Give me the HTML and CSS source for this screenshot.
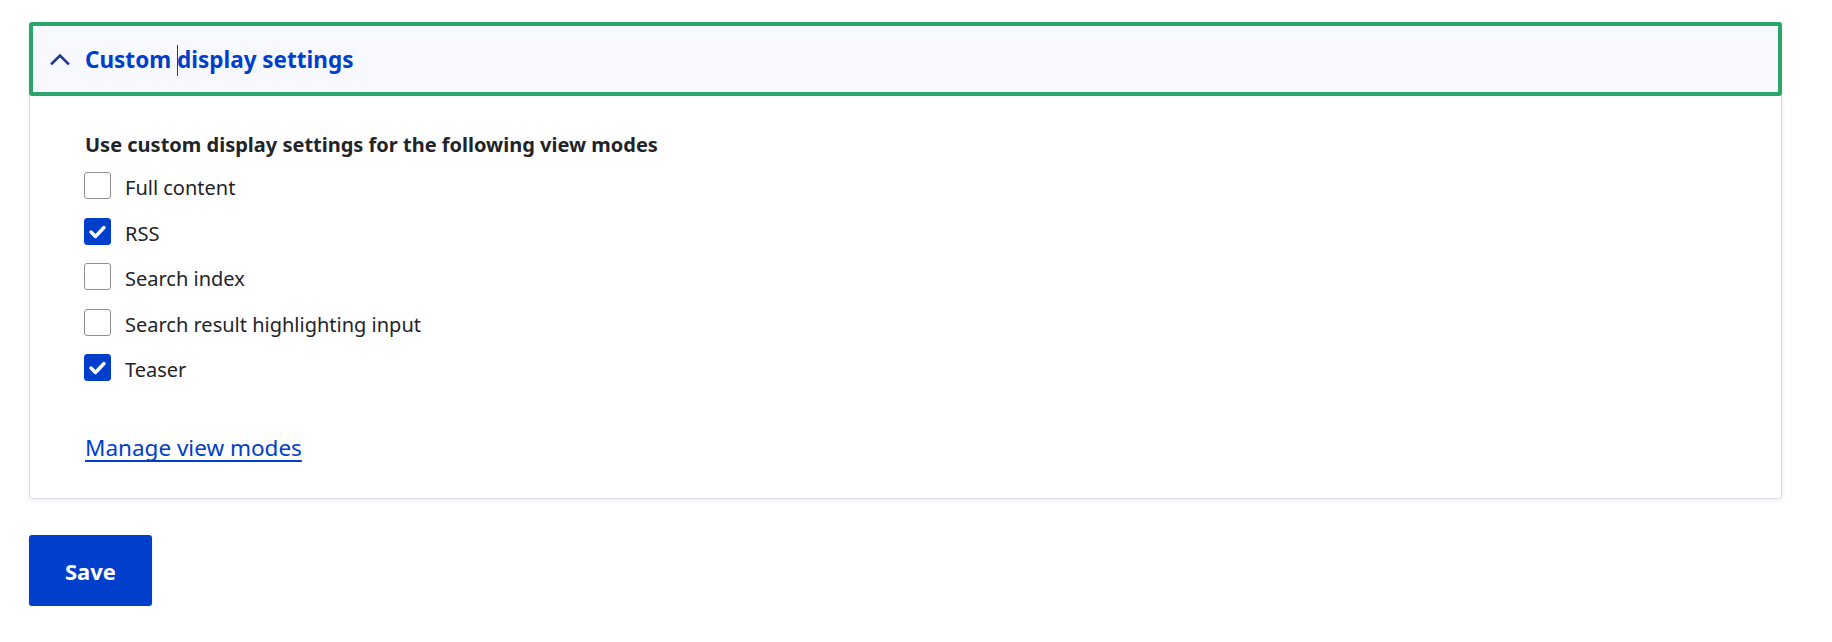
FILE: index.html
```html
<!DOCTYPE html>
<html lang="en">
<head>
<meta charset="utf-8">
<title>Custom display settings</title>
<link rel="stylesheet" href="styles.css">
</head>
<body>
<div class="page">
  <section class="card">
    <div class="summary">
      <svg class="chevron" width="20" height="12" viewBox="0 0 20 12" aria-hidden="true"><polyline points="2,10.5 10,2.5 18,10.5" fill="none" stroke="#1b3a8f" stroke-width="2.6" stroke-linecap="square"/></svg>
      <span class="title">Custom <span class="caret"></span>display settings</span>
    </div>
    <div class="body">
      <div class="legend">Use custom display settings for the following view modes</div>
      <ul class="options">
        <li class="option"><span class="box"></span><span class="label">Full content</span></li>
        <li class="option"><span class="box checked"><svg width="27" height="27" viewBox="0 0 27 27"><polyline points="7,14 11.5,18.5 20,9.5" fill="none" stroke="#fff" stroke-width="3.4" stroke-linecap="round" stroke-linejoin="round"/></svg></span><span class="label">RSS</span></li>
        <li class="option"><span class="box"></span><span class="label">Search index</span></li>
        <li class="option"><span class="box"></span><span class="label">Search result highlighting input</span></li>
        <li class="option"><span class="box checked"><svg width="27" height="27" viewBox="0 0 27 27"><polyline points="7,14 11.5,18.5 20,9.5" fill="none" stroke="#fff" stroke-width="3.4" stroke-linecap="round" stroke-linejoin="round"/></svg></span><span class="label">Teaser</span></li>
      </ul>
      <a class="link" href="#">Manage view modes</a>
    </div>
  </section>
  <button class="save" type="button">Save</button>
</div>
</body>
</html>
```
FILE: styles.css
```css
html, body {
  margin: 0;
  padding: 0;
  background: #ffffff;
}
body {
  font-family: "Noto Sans", "Open Sans", sans-serif;
  color: #232429;
}
.page {
  padding: 22px 50px 0 29px;
}
.card {
  border: 1px solid #dcdde2;
  border-radius: 3px;
  box-shadow: 0 2px 5px rgba(0, 0, 0, 0.08);
  background: #fff;
}
.summary {
  margin: -1px -1px 0 -1px;
  height: 66px;
  border: 4px solid #2ba66b;
  border-radius: 3px;
  background: #f7f9fe;
  display: flex;
  align-items: center;
  padding-left: 17px;
}
.chevron {
  display: block;
  margin-top: -1px;
}
.title {
  margin-left: 15px;
  padding-top: 2px;
  font-size: 22.5px;
  font-weight: 700;
  color: #003ecc;
  line-height: 32px;
}
.caret {
  display: inline-block;
  width: 1.5px;
  height: 31px;
  background: #1b3a8f;
  vertical-align: -8px;
  margin-right: -1.5px;
}
.body {
  padding: 37px 0 34px 55px;
}
.legend {
  font-size: 20px;
  font-weight: 700;
  line-height: 24px;
}
.options {
  list-style: none;
  margin: 15px 0 0 0;
  padding: 0;
  display: flex;
  flex-direction: column;
  gap: 18.5px;
}
.option {
  display: flex;
  align-items: flex-start;
  height: 27px;
}
.box {
  box-sizing: border-box;
  width: 27px;
  height: 27px;
  border: 1px solid #8e9099;
  border-radius: 3px;
  background: #fff;
  flex: none;
  margin-left: -1px;
}
.box.checked {
  background: #003ecc;
  border-color: #003ecc;
}
.box.checked svg {
  display: block;
  margin: -1px;
}
.label {
  margin-left: 14px;
  font-size: 20px;
  line-height: 27px;
  padding-top: 2px;
}
.link {
  display: inline-block;
  margin-top: 51px;
  font-size: 22.5px;
  line-height: 32px;
  color: #003ecc;
  text-decoration: underline;
  text-decoration-thickness: 1.5px;
  text-decoration-skip-ink: none;
  text-underline-offset: 4px;
}
.save {
  margin-top: 36px;
  width: 123px;
  height: 71px;
  border: none;
  border-radius: 3px;
  background: #003ecc;
  color: #fff;
  font-family: "Noto Sans", "Open Sans", sans-serif;
  font-size: 22px;
  font-weight: 700;
  box-shadow: 0 1px 2px rgba(0, 0, 0, 0.15);
  padding: 0;
}
```
